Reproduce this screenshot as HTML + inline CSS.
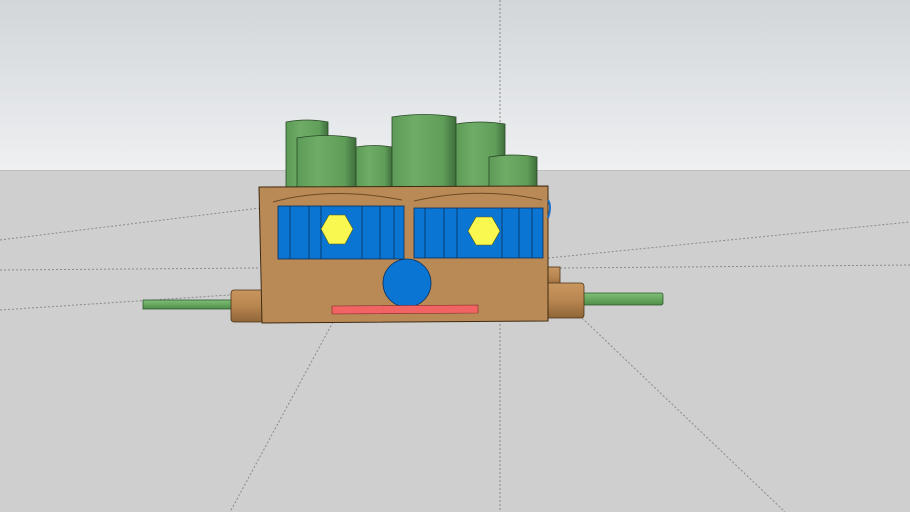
<!DOCTYPE html>
<html><head><meta charset="utf-8"><style>html,body{margin:0;padding:0;width:910px;height:512px;overflow:hidden;background:#d0d0d0}</style></head>
<body>
<svg width="910" height="512" viewBox="0 0 910 512" xmlns="http://www.w3.org/2000/svg">
<defs>
<linearGradient id="sky" x1="0" y1="0" x2="0" y2="1">
<stop offset="0" stop-color="#d2d6d9"/><stop offset="1" stop-color="#eef0f2"/>
</linearGradient>
<linearGradient id="cyl" x1="0" y1="0" x2="1" y2="0">
<stop offset="0" stop-color="#5c9a57"/><stop offset="0.35" stop-color="#6eac67"/><stop offset="0.8" stop-color="#5f9d59"/><stop offset="1" stop-color="#3f6e3b"/>
</linearGradient>
<linearGradient id="brc" x1="0" y1="0" x2="0" y2="1">
<stop offset="0" stop-color="#c99660"/><stop offset="0.5" stop-color="#b88650"/><stop offset="1" stop-color="#8f6538"/>
</linearGradient>
<linearGradient id="rod" x1="0" y1="0" x2="0" y2="1">
<stop offset="0" stop-color="#7fbf77"/><stop offset="1" stop-color="#4f8f49"/>
</linearGradient>
</defs>
<rect x="0" y="0" width="910" height="170" fill="url(#sky)"/>
<rect x="0" y="170" width="910" height="342" fill="#cfcfcf"/>
<line x1="0" y1="170.5" x2="910" y2="170.5" stroke="#bdbdbd"/>
<g stroke="#8a8a8a" stroke-width="1" stroke-dasharray="2,2" fill="none">
<line x1="500" y1="0" x2="500" y2="512"/>
<line x1="0" y1="240" x2="260" y2="208"/>
<line x1="0" y1="270" x2="260" y2="268"/>
<line x1="0" y1="310" x2="260" y2="293"/>
<line x1="548" y1="258" x2="910" y2="222"/>
<line x1="560" y1="268" x2="910" y2="265"/>
<line x1="333" y1="322" x2="230" y2="512"/>
<line x1="582" y1="318" x2="785" y2="512"/>
</g>
<!-- left rod & cylinder -->
<rect x="143" y="300" width="92" height="9" fill="url(#rod)" stroke="#2f5a2c" stroke-width="0.8"/>
<rect x="231" y="290" width="32" height="32" rx="3" fill="url(#brc)" stroke="#4a3216" stroke-width="0.8"/>
<!-- right cylinders -->
<rect x="545" y="267" width="15" height="20" fill="url(#brc)" stroke="#4a3216" stroke-width="0.8"/>
<rect x="582" y="293" width="81" height="12" rx="2" fill="url(#rod)" stroke="#2f5a2c" stroke-width="0.8"/>
<rect x="546" y="283" width="38" height="35" rx="3" fill="url(#brc)" stroke="#4a3216" stroke-width="0.8"/>
<!-- top cylinders -->
<g stroke="#2a4a27" stroke-width="0.8" fill="url(#cyl)">
<path d="M286 122 Q307 118 328 122 V190 H286 Z"/>
<path d="M297 138 Q326 133 356 138 V190 H297 Z"/>
<path d="M356 147 Q374 144 392 147 V190 H356 Z"/>
<path d="M392 117 Q424 112 456 117 V190 H392 Z"/>
<path d="M456 124 Q480 120 505 124 V190 H456 Z"/>
<path d="M489 157 Q513 153 537 157 V190 H489 Z"/>
</g>
<!-- box -->
<path d="M259 187 L548 186 L548 321 L262 323 Z" fill="#b98a55" stroke="#3e2a12" stroke-width="1"/>
<path d="M548 200 q4 6 0 18" stroke="#1a6fc9" stroke-width="2" fill="none"/>
<!-- eyebrows -->
<path d="M273 202 Q330 186 402 200" stroke="#6b4a25" stroke-width="1" fill="none"/>
<path d="M414 201 Q480 186 542 200" stroke="#6b4a25" stroke-width="1" fill="none"/>
<!-- eye panels -->
<rect x="278" y="206" width="126" height="53" fill="#0a75d2" stroke="#0b2f5c" stroke-width="0.8"/>
<rect x="414" y="208" width="129" height="50" fill="#0a75d2" stroke="#0b2f5c" stroke-width="0.8"/>
<g stroke="#0b2f5c" stroke-width="0.8">
<line x1="290" y1="206" x2="290" y2="259"/><line x1="309" y1="206" x2="309" y2="259"/><line x1="321" y1="206" x2="321" y2="259"/><line x1="362" y1="206" x2="362" y2="259"/><line x1="380" y1="206" x2="380" y2="259"/><line x1="394" y1="206" x2="394" y2="259"/>
<line x1="425" y1="208" x2="425" y2="258"/><line x1="444" y1="208" x2="444" y2="258"/><line x1="457" y1="208" x2="457" y2="258"/><line x1="502" y1="208" x2="502" y2="258"/><line x1="519" y1="208" x2="519" y2="258"/><line x1="532" y1="208" x2="532" y2="258"/>
</g>
<polygon points="321,229 329,215 345,215 353,229 345,244 329,244" fill="#f8f850" stroke="#5a5a10" stroke-width="0.6"/>
<polygon points="468,231 476,217 492,217 500,231 492,245 476,245" fill="#f8f850" stroke="#5a5a10" stroke-width="0.6"/>
<!-- nose -->
<circle cx="407" cy="283" r="24" fill="#0a75d2" stroke="#0b2f5c" stroke-width="0.8"/>
<!-- mouth -->
<path d="M332 306 L478 305 L478 313 L332 314 Z" fill="#f26464" stroke="#7a2a2a" stroke-width="0.6"/>
</svg>
</body></html>
